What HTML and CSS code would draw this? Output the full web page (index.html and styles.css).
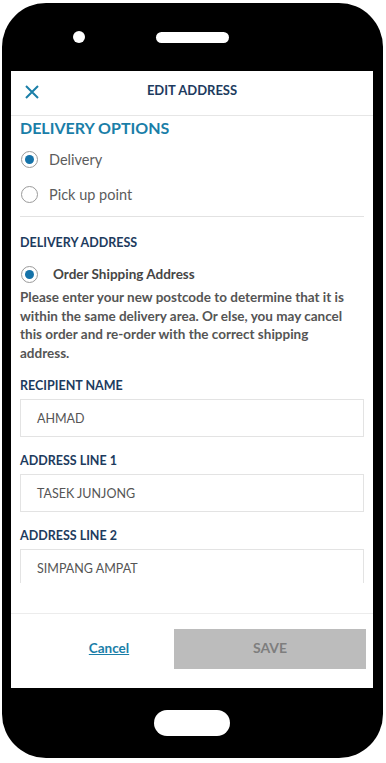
FILE: index.html
```html
<!DOCTYPE html>
<html>
<head>
<meta charset="utf-8">
<link rel="stylesheet" href="styles.css">
</head>
<body>
<div class="phone">
  <div class="bezel-top">
    <span class="camera"></span>
    <span class="speaker"></span>
  </div>
  <div class="screen">
    <div class="header">
      <svg class="close" width="14" height="14" viewBox="0 0 14 14"><path d="M1 1L13 13M13 1L1 13" stroke="#1b7fa8" stroke-width="2" fill="none"/></svg>
      <div class="title">EDIT ADDRESS</div>
    </div>
    <div class="scroll">
      <div class="section-title">DELIVERY OPTIONS</div>
      <div class="radio-row first"><span class="radio checked"></span><span class="radio-label">Delivery</span></div>
      <div class="radio-row"><span class="radio"></span><span class="radio-label">Pick up point</span></div>
      <div class="divider"></div>
      <div class="label first">DELIVERY ADDRESS</div>
      <div class="radio-row addr"><span class="radio checked"></span><span class="radio-label bold">Order Shipping Address</span></div>
      <p class="note">Please enter your new postcode to determine that it is within the same delivery area. Or else, you may cancel this order and re-order with the correct shipping address.</p>
      <div class="label">RECIPIENT NAME</div>
      <div class="input">AHMAD</div>
      <div class="label">ADDRESS LINE 1</div>
      <div class="input">TASEK JUNJONG</div>
      <div class="label">ADDRESS LINE 2</div>
      <div class="input">SIMPANG AMPAT</div>
    </div>
    <div class="footer">
      <a class="cancel">Cancel</a>
      <div class="save">SAVE</div>
    </div>
  </div>
  <div class="bezel-bottom">
    <span class="home"></span>
  </div>
</div>
</body>
</html>
```
FILE: styles.css
```css
* { box-sizing: border-box; }
html, body { margin: 0; padding: 0; background: #fff; }
body { font-family: "Lato", "Liberation Sans", sans-serif; }
.phone {
  margin: 3px 0 0 2px;
  width: 381px;
  height: 755px;
  background: #000;
  border-radius: 44px;
  padding: 0 10px 0 9px;
  display: flex;
  flex-direction: column;
}
.bezel-top {
  height: 68px;
  display: flex;
  align-items: center;
  padding-left: 62px;
  gap: 71px;
}
.camera { width: 12px; height: 12px; border-radius: 50%; background: #fff; }
.speaker { width: 73px; height: 11px; border-radius: 6px; background: #fff; }
.screen {
  height: 617px;
  background: #fff;
  display: flex;
  flex-direction: column;
}
.header {
  height: 45px;
  border-bottom: 1px solid #e6e6e6;
  display: flex;
  align-items: flex-start;
  padding-left: 14px;
  flex-shrink: 0;
}
.close { display: block; margin-top: 14px; }
.title {
  flex: 1;
  text-align: center;
  margin-right: 28px;
  margin-top: 10px;
  line-height: 18px;
  font-weight: 700;
  font-size: 13px;
  color: #1d3b5e;
}
.scroll {
  height: 467px;
  overflow: hidden;
  padding: 2px 9px 0 9px;
  flex-shrink: 0;
}
.section-title {
  font-weight: 700;
  font-size: 16px;
  color: #1a7ea8;
  line-height: 20px;
}
.radio-row {
  display: flex;
  align-items: center;
  height: 35px;
  padding-left: 1px;
}
.radio-row.first { margin-top: 4px; }
.radio {
  width: 17px; height: 17px;
  border-radius: 50%;
  border: 1px solid #9a9a9a;
  display: flex; align-items: center; justify-content: center;
  margin-right: 11px;
}
.radio.checked::after {
  content: "";
  width: 9px; height: 9px;
  border-radius: 50%;
  background: #1573a9;
}
.radio-label { font-size: 14.5px; color: #5c5c5c; }
.radio-label.bold { font-weight: 700; font-size: 13.5px; color: #454545; }
.addr { height: 20px; margin-top: 12px; }
.addr .radio { margin-right: 15px; }
.divider { height: 1px; background: #e2e2e2; margin-top: 4px; }
.label {
  font-weight: 700;
  font-size: 12.5px;
  color: #1d3b5e;
  line-height: 18px;
  margin-top: 15px;
}
.label.first { margin-top: 17px; }
.note {
  margin: 4px 0 0 0;
  width: 336px;
  font-weight: 700;
  font-size: 13.5px;
  line-height: 18.5px;
  color: #555;
}
.input {
  height: 38px;
  border: 1px solid #e3e3e3;
  margin-top: 4px;
  padding-left: 16px;
  display: flex;
  align-items: center;
  font-size: 12.5px;
  color: #555;
}
.footer {
  flex: 1;
  margin-top: 30px;
  border-top: 1px solid #ececec;
  display: flex;
  align-items: flex-start;
  padding: 15px 7px 0 0;
}
.cancel {
  width: 163px;
  padding-left: 33px;
  text-align: center;
  margin-top: 11px;
  font-weight: 700;
  font-size: 13.5px;
  color: #1a7ea8;
  text-decoration: underline;
}
.save {
  flex: 1;
  height: 40px;
  padding-bottom: 3px;
  background: #bcbcbc;
  color: #7e7e7e;
  font-weight: 700;
  font-size: 14px;
  display: flex;
  align-items: center;
  justify-content: center;
}
.bezel-bottom {
  flex: 1;
  display: flex;
  align-items: center;
  justify-content: center;
}
.home { width: 76px; height: 26px; border-radius: 13px; background: #fff; }
```
